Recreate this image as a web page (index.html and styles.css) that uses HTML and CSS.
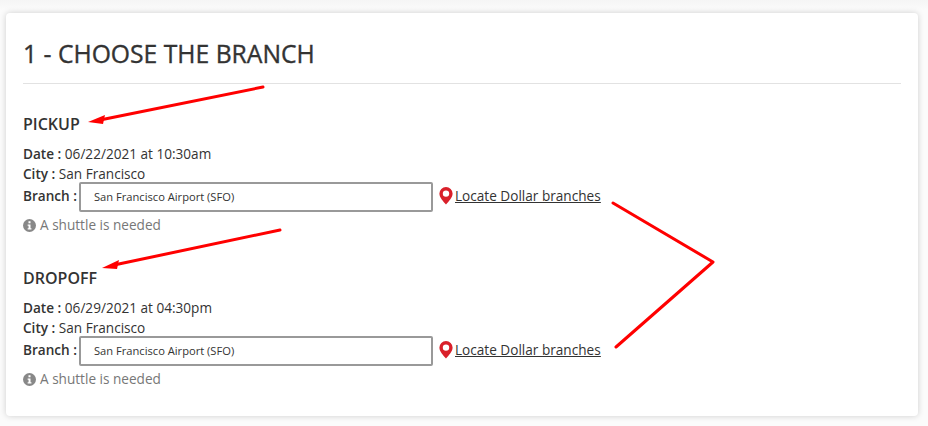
FILE: index.html
```html
<!DOCTYPE html>
<html lang="en">

<head>
  <meta charset="UTF-8">
  <title>choose the branch</title>
  <link rel="stylesheet" href="styles.css">
</head>

<body>
  <div class="page">
    <div class="card">
      <h1>1 - CHOOSE THE BRANCH</h1>

      <div class="block">
        <h2>PICKUP</h2>
        <div class="row"><b>Date :</b> 06/22/2021 at 10:30am</div>
        <div class="row"><b>City :</b> San Francisco</div>
        <div class="branch">
          <b>Branch :</b>
          <input type="text" class="input" value="San Francisco Airport (SFO)" readonly>
          <a href="#" class="locate">
            <svg class="pin" viewBox="0 0 14 18"><path fill-rule="evenodd" d="M7 0a6.6 6.6 0 0 1 6.6 6.6c0 4-3.6 7.600-6.600 11C4 14.200.4 10.600.4 6.600A6.600 6.600 0 0 1 7 0zm0 3.400a3.200 3.200 0 1 0 0 6.400 3.200 3.200 0 0 0 0-6.400z"/></svg>
            <span>Locate Dollar branches</span>
          </a>
        </div>
        <div class="note">
          <svg class="info" viewBox="0 0 14 14"><circle cx="7" cy="7" r="7"/><rect x="5.900" y="2.400" width="2.200" height="2.200" fill="#fff"/><path fill="#fff" d="M5 5.800h3.100v4.100h1v1.500H5V9.900h1V7.300H5z"/></svg>
          A shuttle is needed
        </div>
      </div>

      <div class="block">
        <h2>DROPOFF</h2>
        <div class="row"><b>Date :</b> 06/29/2021 at 04:30pm</div>
        <div class="row"><b>City :</b> San Francisco</div>
        <div class="branch">
          <b>Branch :</b>
          <input type="text" class="input" value="San Francisco Airport (SFO)" readonly>
          <a href="#" class="locate">
            <svg class="pin" viewBox="0 0 14 18"><path fill-rule="evenodd" d="M7 0a6.6 6.6 0 0 1 6.6 6.6c0 4-3.6 7.600-6.600 11C4 14.200.4 10.600.4 6.600A6.600 6.600 0 0 1 7 0zm0 3.400a3.200 3.200 0 1 0 0 6.400 3.200 3.200 0 0 0 0-6.400z"/></svg>
            <span>Locate Dollar branches</span>
          </a>
        </div>
        <div class="note">
          <svg class="info" viewBox="0 0 14 14"><circle cx="7" cy="7" r="7"/><rect x="5.900" y="2.400" width="2.200" height="2.200" fill="#fff"/><path fill="#fff" d="M5 5.800h3.100v4.100h1v1.500H5V9.900h1V7.300H5z"/></svg>
          A shuttle is needed
        </div>
      </div>
    </div>
  </div>

  <!-- red arrows drawn on top of the screenshot -->
  <svg class="marks" viewBox="0 0 928 426">
    <path class="line" d="M263 87 100 120"/>
    <path class="head" d="M88 122 105 115 103 124z"/>
    <path class="line" d="M280 230 114 265"/>
    <path class="head" d="M102 268 119 260 117 269z"/>
    <path class="line" d="M613 203 713 262 616 347"/>
  </svg>
</body>

</html>
```

FILE: styles.css
```css
html,
body {
  height: 100%;
}

body {
  margin: 0;
  background: linear-gradient(#f5f5f5, #fbfbfb 10px);
  color: #333;
  font-family: "Open Sans", sans-serif;
  font-size: 13.600px;
  overflow: hidden;
}

.page {
  padding: 13px 10px 10px 6px;
}

.card {
  background: #FFF;
  height: 403px;
  box-sizing: border-box;
  padding: 23px 17px 0;
  border-radius: 4px;
  box-shadow: 0 0 6px rgba(0, 0, 0, 0.18);
}

h1 {
  margin: 0;
  padding-bottom: 11px;
  border-bottom: 1px solid #e2e2e2;
  font-size: 24.700px;
  line-height: 36px;
  font-weight: 400;
  -webkit-text-stroke: 0.35px #333;
  color: #333;
}

.block {
  padding-top: 29px;
}

.block + .block {
  padding-top: 32px;
}

h2 {
  margin: 0 0 9px;
  font-size: 16px;
  line-height: 22px;
  font-weight: 600;
}

.row {
  line-height: 20px;
}

b {
  font-weight: 600;
}

.branch {
  display: flex;
  align-items: center;
  height: 30px;
  margin-top: -2px;
}

.branch b {
  margin-bottom: 3px;
}

.input {
  box-sizing: border-box;
  width: 354px;
  height: 30px;
  margin-left: 2px;
  padding: 0 13px 2px;
  border: 2px solid #999;
  border-radius: 2px;
  background: #FFF;
  color: #333;
  font-family: "Open Sans", sans-serif;
  font-size: 11.150px;
}

.locate {
  display: flex;
  align-items: center;
  margin-left: 6px;
  margin-bottom: 3px;
  color: #333;
}

.locate span {
  text-decoration: underline;
}

.pin {
  width: 14px;
  height: 18px;
  margin-right: 2px;
  fill: #d9202a;
}

.note {
  display: flex;
  align-items: center;
  margin-top: 3px;
  line-height: 20px;
  color: #777;
}

.info {
  width: 13px;
  height: 13px;
  margin-right: 4px;
  fill: #888;
}

.marks {
  position: absolute;
  top: 0;
  left: 0;
  width: 928px;
  height: 426px;
}

.line {
  fill: none;
  stroke: #f00;
  stroke-width: 3;
  stroke-linecap: round;
  stroke-linejoin: round;
}

.head {
  fill: #f00;
}
```
